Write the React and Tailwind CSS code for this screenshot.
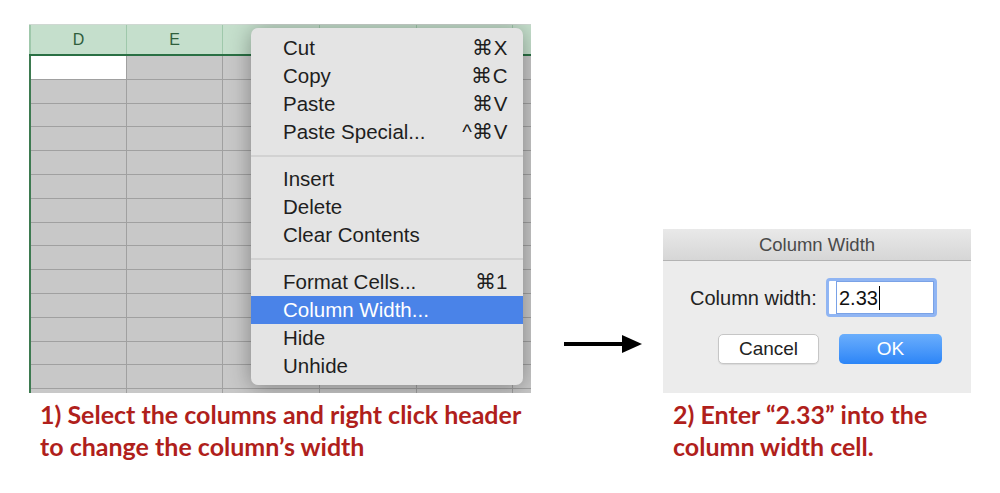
import React from "react";

const cols = "grid-cols-[95px_95px_96px_96px_95px_18px]";

function MenuItem({ label, shortcut, active }) {
  return (
    <div
      className={
        "h-[28px] flex items-center justify-between pl-[32px] pr-[15px] " +
        (active ? "bg-[#4a83e8] text-white" : "text-[#1e1e1e]")
      }
    >
      <span>{label}</span>
      {shortcut ? <span className="tracking-[0.5px]">{shortcut}</span> : null}
    </div>
  );
}

function Sep() {
  return (
    <div className="h-[19px] flex items-center">
      <div className="h-[2px] w-full bg-[#d2d2d2]" />
    </div>
  );
}

function Sheet() {
  const rows = Array.from({ length: 15 });
  return (
    <div className="relative w-[502px] h-[369px] overflow-hidden">
      <div className="flex flex-col h-full">
        <div className={"grid " + cols + " gap-x-px bg-[#9fc8ab] h-[32px] border-t border-[#cfd8d2] border-b-2 border-b-[#2a7044] pl-[2px]"}>
          {["D", "E", "", "", "", ""].map((c, i) => (
            <div key={i} className="bg-[#c5dfcc] flex items-center justify-center text-[16px] text-[#2f5e3c]">
              {c}
            </div>
          ))}
        </div>
        <div className="flex-1 border-l-2 border-[#3d7a50] overflow-hidden">
          <div className={"grid " + cols + " gap-px bg-[#a0a0a0] auto-rows-[22.8px]"}>
            {rows.map((_, r) =>
              [0, 1, 2, 3, 4, 5].map((c) => (
                <div
                  key={r + "-" + c}
                  className={r === 0 && c === 0 ? "bg-white" : "bg-[#c8c8c8]"}
                />
              ))
            )}
          </div>
        </div>
      </div>
      <div className="absolute left-[222px] top-[4px] w-[272px] h-[357px] rounded-[7px] bg-[#e4e4e4] shadow-[0_2px_22px_rgba(0,0,0,0.35)] pt-[6px] text-[20.5px] overflow-hidden">
        <MenuItem label="Cut" shortcut="⌘X" />
        <MenuItem label="Copy" shortcut="⌘C" />
        <MenuItem label="Paste" shortcut="⌘V" />
        <MenuItem label="Paste Special..." shortcut="^⌘V" />
        <Sep />
        <MenuItem label="Insert" />
        <MenuItem label="Delete" />
        <MenuItem label="Clear Contents" />
        <Sep />
        <MenuItem label="Format Cells..." shortcut="⌘1" />
        <MenuItem label="Column Width..." active />
        <MenuItem label="Hide" />
        <MenuItem label="Unhide" />
      </div>
    </div>
  );
}

function Dialog() {
  return (
    <div className="w-[308px] h-[164px] bg-[#ececec] flex flex-col">
      <div className="h-[32px] bg-gradient-to-b from-[#e9e9e9] to-[#d6d6d6] border-b border-[#b3b3b3] flex items-center justify-center text-[18.5px] text-[#4a4a4a]">
        Column Width
      </div>
      <div className="flex items-center mt-[17px] pl-[27px]">
        <span className="text-[20px] text-[#222] w-[136px]">Column width:</span>
        <div className="w-[111px] h-[39px] rounded-[4px] border-[3px] border-[#90b5f3] bg-white flex items-center pl-[7px]">
          <div className="flex-1 h-full border border-[#7aa2e6] flex items-center pl-[2px] text-[20px] text-[#111]">
            2.33<span className="inline-block w-px h-[24px] bg-black ml-[1px]" />
          </div>
        </div>
      </div>
      <div className="flex mt-[17px] pl-[55px] gap-[20px]">
        <div className="w-[101px] h-[30px] rounded-[5px] bg-white border border-[#c6c6c6] shadow-[0_1px_1px_rgba(0,0,0,0.08)] flex items-center justify-center text-[19px] text-[#222]">
          Cancel
        </div>
        <div className="w-[103px] h-[30px] rounded-[5px] bg-gradient-to-b from-[#6aaefc] to-[#2b85f7] flex items-center justify-center text-[19px] text-white">
          OK
        </div>
      </div>
    </div>
  );
}

export default function App() {
  return (
    <div
      className="w-[1000px] h-[493px] bg-white overflow-hidden pt-[24px]"
      style={{ fontFamily: '"Liberation Sans", Arial, sans-serif' }}
    >
      <div className="flex items-end pl-[29px] h-[369px]">
        <Sheet />
        <svg width="78" height="20" viewBox="0 0 78 20" className="ml-[33px] mb-[39px]">
          <rect x="0" y="8" width="60" height="4" fill="#000" />
          <polygon points="58,1 78,10 58,19" fill="#000" />
        </svg>
        <div className="ml-[21px]">
          <Dialog />
        </div>
      </div>
      <div
        className="flex mt-[5px] text-[#b01f1c] font-bold text-[25px] leading-[32px]"
        style={{ fontFamily: 'Lato, "Open Sans", sans-serif' }}
      >
        <div className="pl-[40px] w-[673px]">
          1) Select the columns and right click header
          <br />
          to change the column’s width
        </div>
        <div>
          2) Enter “2.33” into the
          <br />
          column width cell.
        </div>
      </div>
    </div>
  );
}
